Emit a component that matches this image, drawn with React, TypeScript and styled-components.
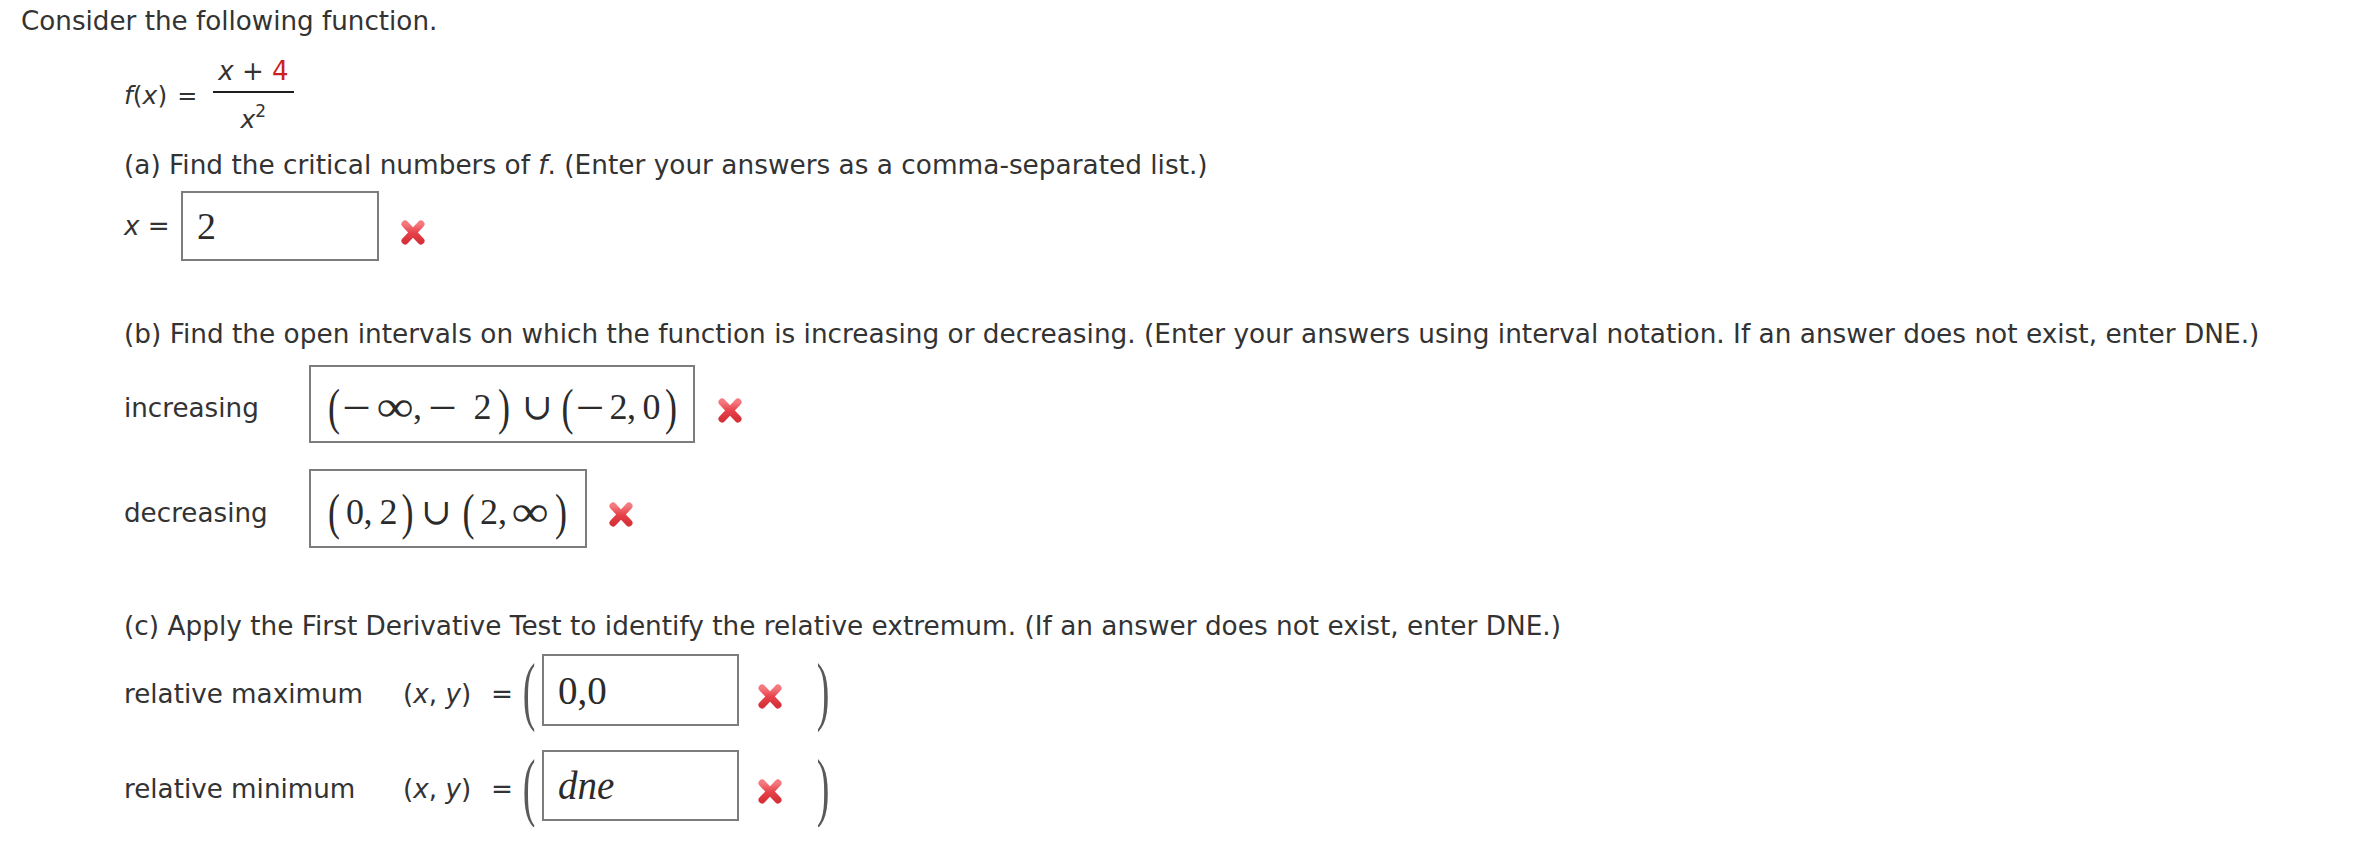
import styled, { createGlobalStyle } from "styled-components";

const GlobalStyle = createGlobalStyle`
  body {
    margin: 0;
    background: #ffffff;
    color: #333333;
    font-family: "DejaVu Sans", Verdana, sans-serif;
  }
`;

const Page = styled.div`
  padding: 6px 21px;
`;

const Title = styled.p`
  margin: 0;
  font-size: 26.2px;
  line-height: 30px;
  white-space: nowrap;
`;

const Indent = styled.div`
  margin-left: 103px;
  display: flex;
  flex-direction: column;
  align-items: flex-start;
`;

const Prompt = styled.p<{ $top: number }>`
  margin: ${(p) => p.$top}px 0 0;
  font-size: 26.35px;
  line-height: 30px;
  white-space: nowrap;
`;

const FunctionRow = styled.div`
  display: flex;
  align-items: center;
  margin-top: 22px;
  font-size: 24px;
`;

const FnName = styled.span`
  font-size: 25px;
`;

const Eq = styled.span`
  margin: 0 16px 0 10px;
`;

const Fraction = styled.span`
  display: inline-flex;
  flex-direction: column;
  align-items: center;
`;

const Numer = styled.span`
  font-size: 26px;
  line-height: 26px;
  padding: 0 5px 7px;
  white-space: nowrap;
`;

const Bar = styled.span`
  align-self: stretch;
  height: 2px;
  background: #1e1e1e;
`;

const Denom = styled.span`
  font-size: 25px;
  line-height: 26px;
  padding-top: 14px;
`;

const Red = styled.span`
  color: #cc1f1f;
`;

const Sup = styled.sup`
  font-size: 17px;
  line-height: 0;
  vertical-align: 11px;
`;

const AnswerRow = styled.div<{ $top: number }>`
  display: flex;
  align-items: center;
  margin-top: ${(p) => p.$top}px;
  font-size: 26.2px;
  white-space: nowrap;
`;

const Label = styled.span<{ $w: number; $down?: number }>`
  flex: none;
  width: ${(p) => p.$w}px;
  padding-top: ${(p) => p.$down ?? 0}px;
`;

const AnswerBox = styled.div<{ $w: number; $h: number; $pad: number; $size: number; $down?: number }>`
  box-sizing: border-box;
  flex: none;
  display: flex;
  align-items: center;
  width: ${(p) => p.$w}px;
  height: ${(p) => p.$h}px;
  padding-left: ${(p) => p.$pad}px;
  padding-top: ${(p) => p.$down ?? 0}px;
  border: 2px solid #7d7d7d;
  font-family: "Liberation Serif", "DejaVu Serif", serif;
  font-size: ${(p) => p.$size}px;
  line-height: 1;
  color: #2b2b2b;
`;

const Piece = styled.span<{ $w: number; $ml: number }>`
  flex: none;
  display: inline-flex;
  justify-content: center;
  width: ${(p) => p.$w}px;
  margin-left: ${(p) => p.$ml}px;
  line-height: 36px;
`;

const ParenPiece = styled(Piece)`
  transform: scaleY(1.4);
`;

const InfPiece = styled(Piece)`
  transform: scale(1.45, 1.2);
`;

const MinusPiece = styled(Piece)`
  font-family: "DejaVu Serif", serif;
  font-size: 29px;
  transform: scaleX(1.3);
`;

const Ital = styled.i`
  font-style: italic;
`;

const BigParen = styled.span<{ $ml: number }>`
  flex: none;
  display: inline-flex;
  justify-content: center;
  width: 26px;
  margin-left: ${(p) => p.$ml}px;
  font-family: "Liberation Serif", "DejaVu Serif", serif;
  font-size: 38px;
  line-height: 40px;
  color: #5a5a5a;
  transform: scaleY(2);
`;

const XY = styled.span`
  flex: none;
  width: 113px;
  padding-top: 7px;
`;

const XYEq = styled.span`
  margin-left: 20px;
`;

const MarkSvg = styled.svg<{ $gap: number }>`
  flex: none;
  margin-left: ${(p) => p.$gap}px;
  margin-top: 12px;
`;

function WrongMark({ gap }: { gap: number }) {
  return (
    <MarkSvg $gap={gap} width="26" height="27" viewBox="0 0 26 27">
      <defs>
        <linearGradient id="wrongGrad" x1="0" y1="0" x2="0" y2="1">
          <stop offset="0" stopColor="#f47a80" />
          <stop offset="0.5" stopColor="#e8434b" />
          <stop offset="1" stopColor="#d73139" />
        </linearGradient>
      </defs>
      <g stroke="url(#wrongGrad)" strokeWidth="7" strokeLinecap="round">
        <line x1="5" y1="5" x2="21" y2="22" />
        <line x1="21" y1="5" x2="5" y2="22" />
      </g>
    </MarkSvg>
  );
}

type Token = { ch: string; from: number; to: number; kind?: "paren" | "inf" | "minus" };

// ink positions of each glyph, measured from the left edge of the box
const increasing: Token[] = [
  { ch: "(", from: 19, to: 31, kind: "paren" },
  { ch: "−", from: 39, to: 56, kind: "minus" },
  { ch: "∞", from: 68, to: 104, kind: "inf" },
  { ch: ",", from: 106, to: 111 },
  { ch: "−", from: 123, to: 144, kind: "minus" },
  { ch: "2", from: 164, to: 183 },
  { ch: ")", from: 189, to: 201, kind: "paren" },
  { ch: "∪", from: 218, to: 238 },
  { ch: "(", from: 253, to: 264, kind: "paren" },
  { ch: "−", from: 271, to: 291, kind: "minus" },
  { ch: "2", from: 301, to: 318 },
  { ch: ",", from: 320, to: 325 },
  { ch: "0", from: 334, to: 351 },
  { ch: ")", from: 356, to: 368, kind: "paren" },
];

const decreasing: Token[] = [
  { ch: "(", from: 19, to: 31, kind: "paren" },
  { ch: "0", from: 38, to: 54 },
  { ch: ",", from: 57, to: 61 },
  { ch: "2", from: 71, to: 88 },
  { ch: ")", from: 93, to: 104, kind: "paren" },
  { ch: "∪", from: 116, to: 138 },
  { ch: "(", from: 153, to: 166, kind: "paren" },
  { ch: "2", from: 171, to: 189 },
  { ch: ",", from: 191, to: 196 },
  { ch: "∞", from: 204, to: 238, kind: "inf" },
  { ch: ")", from: 246, to: 258, kind: "paren" },
];

function Interval({ tokens }: { tokens: Token[] }) {
  let prev = 2;
  return (
    <>
      {tokens.map((t, i) => {
        const ml = t.from - prev;
        prev = t.to;
        const w = t.to - t.from;
        if (t.kind === "paren")
          return (
            <ParenPiece key={i} $w={w} $ml={ml}>
              {t.ch}
            </ParenPiece>
          );
        if (t.kind === "inf")
          return (
            <InfPiece key={i} $w={w} $ml={ml}>
              {t.ch}
            </InfPiece>
          );
        if (t.kind === "minus")
          return (
            <MinusPiece key={i} $w={w} $ml={ml}>
              {t.ch}
            </MinusPiece>
          );
        return (
          <Piece key={i} $w={w} $ml={ml}>
            {t.ch}
          </Piece>
        );
      })}
    </>
  );
}

export default function App() {
  return (
    <>
      <GlobalStyle />
      <Page>
        <Title>Consider the following function.</Title>
        <Indent>
          <FunctionRow>
            <FnName>
              <Ital>f</Ital>(<Ital>x</Ital>)
            </FnName>
            <Eq>=</Eq>
            <Fraction>
              <Numer>
                <Ital>x</Ital> + <Red>4</Red>
              </Numer>
              <Bar />
              <Denom>
                <Ital>x</Ital>
                <Sup>2</Sup>
              </Denom>
            </Fraction>
          </FunctionRow>

          <Prompt $top={17}>
            (a) Find the critical numbers of <Ital>f</Ital>. (Enter your answers as a comma-separated list.)
          </Prompt>
          <AnswerRow $top={11}>
            <Label $w={57}>
              <Ital>x</Ital> =
            </Label>
            <AnswerBox $w={198} $h={70} $pad={14} $size={38}>
              2
            </AnswerBox>
            <WrongMark gap={21} />
          </AnswerRow>

          <Prompt $top={58}>
            (b) Find the open intervals on which the function is increasing or decreasing. (Enter your answers
            using interval notation. If an answer does not exist, enter DNE.)
          </Prompt>
          <AnswerRow $top={16}>
            <Label $w={185} $down={8}>
              increasing
            </Label>
            <AnswerBox $w={386} $h={78} $pad={0} $size={36} $down={6}>
              <Interval tokens={increasing} />
            </AnswerBox>
            <WrongMark gap={22} />
          </AnswerRow>
          <AnswerRow $top={26}>
            <Label $w={185} $down={8}>
              decreasing
            </Label>
            <AnswerBox $w={278} $h={79} $pad={0} $size={36} $down={6}>
              <Interval tokens={decreasing} />
            </AnswerBox>
            <WrongMark gap={21} />
          </AnswerRow>

          <Prompt $top={63}>
            (c) Apply the First Derivative Test to identify the relative extremum. (If an answer does not exist,
            enter DNE.)
          </Prompt>
          <AnswerRow $top={13}>
            <Label $w={279} $down={7}>
              relative maximum
            </Label>
            <XY>
              (<Ital>x</Ital>, <Ital>y</Ital>)<XYEq>=</XYEq>
            </XY>
            <BigParen $ml={0}>(</BigParen>
            <AnswerBox $w={197} $h={72} $pad={14} $size={39}>
              0,0
            </AnswerBox>
            <WrongMark gap={18} />
            <BigParen $ml={27}>)</BigParen>
          </AnswerRow>
          <AnswerRow $top={24}>
            <Label $w={279} $down={7}>
              relative minimum
            </Label>
            <XY>
              (<Ital>x</Ital>, <Ital>y</Ital>)<XYEq>=</XYEq>
            </XY>
            <BigParen $ml={0}>(</BigParen>
            <AnswerBox $w={197} $h={71} $pad={14} $size={39}>
              <Ital>dne</Ital>
            </AnswerBox>
            <WrongMark gap={18} />
            <BigParen $ml={27}>)</BigParen>
          </AnswerRow>
        </Indent>
      </Page>
    </>
  );
}
